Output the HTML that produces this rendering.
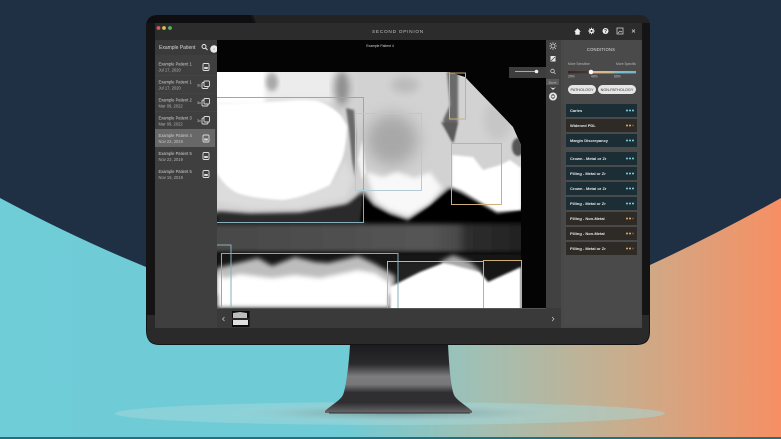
<!DOCTYPE html>
<html><head><meta charset="utf-8">
<style>
html,body{margin:0;padding:0;background:#1f3044;overflow:hidden}
svg{display:block;position:absolute;left:0;top:0;filter:blur(.35px)}
text{font-family:"Liberation Sans",sans-serif}
</style></head>
<body>
<svg width="781" height="439" viewBox="0 0 781 439" xmlns="http://www.w3.org/2000/svg">
<defs>
<linearGradient id="bg" x1="0" x2="1" y1="0" y2="0">
<stop offset="0" stop-color="#6fcdd8"/><stop offset=".44" stop-color="#6fcbd5"/><stop offset=".62" stop-color="#a3bfb2"/><stop offset=".8" stop-color="#c9ad8c"/><stop offset="1" stop-color="#f78f63"/>
</linearGradient>
<linearGradient id="neck" x1="0" x2="0" y1="0" y2="1">
<stop offset="0" stop-color="#1c1c1e"/><stop offset=".28" stop-color="#2a2a2c"/><stop offset=".46" stop-color="#7c7c7e"/><stop offset=".58" stop-color="#77777a"/><stop offset=".7" stop-color="#2f2f31"/><stop offset=".85" stop-color="#2f2f31"/><stop offset="1" stop-color="#6a6a6e"/>
</linearGradient>
<linearGradient id="sl" x1="0" x2="1" y1="0" y2="0">
<stop offset="0" stop-color="#3a2622"/><stop offset=".3" stop-color="#4a3530"/><stop offset=".34" stop-color="#e2b98a"/><stop offset=".6" stop-color="#d8b78e"/><stop offset=".72" stop-color="#7fc0cc"/><stop offset="1" stop-color="#6fb9c8"/>
</linearGradient>
<linearGradient id="band" gradientUnits="userSpaceOnUse" x1="217" x2="521" y1="0" y2="0">
<stop offset="0" stop-color="#484848"/><stop offset=".7" stop-color="#555"/><stop offset=".79" stop-color="#4a4a4a"/><stop offset=".82" stop-color="#2e2e2e"/><stop offset="1" stop-color="#222"/>
</linearGradient>
<radialGradient id="shad"><stop offset="0" stop-color="#6a8a8c" stop-opacity=".75"/><stop offset=".55" stop-color="#90b0b0" stop-opacity=".35"/><stop offset="1" stop-color="#b8dcdc" stop-opacity="0"/></radialGradient>
<filter id="b1" x="-20%" y="-20%" width="140%" height="140%"><feGaussianBlur stdDeviation="1"/></filter>
<filter id="b2" x="-20%" y="-20%" width="140%" height="140%"><feGaussianBlur stdDeviation="2.5"/></filter>
<filter id="b4" x="-30%" y="-30%" width="160%" height="160%"><feGaussianBlur stdDeviation="4"/></filter>
<filter id="b8" x="-40%" y="-40%" width="180%" height="180%"><feGaussianBlur stdDeviation="8"/></filter>
<clipPath id="xr"><path d="M217 72H449L465 77L513 127L521 145V308H217Z"/></clipPath>
<g id="ic1"><rect x="-3" y="-3.500" width="6" height="7" rx="1" fill="none" stroke="#dcdcdc" stroke-width=".9"/><rect x="-1.800" y="0" width="3.600" height="2" fill="#dcdcdc"/></g>
<g id="ic2"><rect x="-3" y="-2.500" width="6" height="6" rx="1" fill="#3d3d3d" stroke="#dcdcdc" stroke-width=".9"/><rect x="-1" y="-4" width="5.500" height="5.500" rx="1" fill="#3d3d3d" stroke="#dcdcdc" stroke-width=".9"/></g>
</defs>

<rect width="781" height="439" fill="#1f3044"/>
<path d="M0 198Q75 238 146 267L650 265Q715 235 781 198V439H0Z" fill="url(#bg)"/>
<rect x="0" y="437" width="781" height="2" fill="#23707f"/>

<ellipse cx="390" cy="413.500" rx="275" ry="11.500" fill="#a5d7da" opacity=".5"/>
<ellipse cx="398" cy="413" rx="180" ry="10" fill="url(#shad)"/>

<!-- stand -->
<path d="M350 345H448C449 362 450 380 453 392C455 400 462 402 472 411V413H325V411C335 402 342 400 344 392C347 380 349 362 350 345Z" fill="url(#neck)"/>
<rect x="329" y="412.500" width="141" height="1" fill="#2e2e30"/>

<!-- monitor -->
<path d="M146 330V27Q146 15 158 15H638Q650 15 650 27V332Q650 345 637 345H159Q146 345 146 330Z" fill="#141414"/>
<path d="M146 27Q146 15 158 15H250L254 23H146Z" fill="#0e0e10"/>
<path d="M253 15H638Q650 15 650 27V23H256Z" fill="#232324"/>
<path d="M147 315H155V328H642V315H649V332Q649 344 637 344H159Q147 344 147 332Z" fill="#2a2a2b"/>

<!-- title bar -->
<rect x="155" y="23" width="487" height="17" fill="#2c2c2d"/>
<circle cx="158.500" cy="28" r="1.900" fill="#d95b62"/>
<circle cx="164" cy="28" r="1.900" fill="#d8c04a"/>
<circle cx="170" cy="28" r="1.900" fill="#58b45a"/>
<text x="398" y="33" font-size="4.800" fill="#bdbdbd" text-anchor="middle" letter-spacing=".7">SECOND OPINION</text>
<path d="M577.500 28.500L574.500 31.500H575.500V34.500H579.500V31.500H580.500Z" fill="#eee" stroke="#eee" stroke-width=".4"/>
<circle cx="591.500" cy="31" r="2.300" fill="#eee"/>
<path d="M591.500 27.700V34.300M588.200 31H594.800M589.200 28.700L593.800 33.300M593.800 28.700L589.200 33.300" stroke="#eee" stroke-width=".9"/>
<circle cx="591.500" cy="31" r="1" fill="#2c2c2d"/>
<circle cx="605.500" cy="31" r="3" fill="#eee"/><text x="605.500" y="33" font-size="5" font-weight="bold" fill="#2c2c2d" text-anchor="middle">?</text>
<rect x="617" y="28" width="6" height="6" fill="none" stroke="#ccc" stroke-width=".8"/><path d="M618 33L620 31L622 32" stroke="#ccc" stroke-width=".7" fill="none"/>
<path d="M632 29.500L635 32.500M635 29.500L632 32.500" stroke="#ccc" stroke-width=".8"/>

<!-- sidebar -->
<rect x="155" y="40" width="62" height="288" fill="#3f3f40"/>
<rect x="155" y="40" width="62" height="15" fill="#3a3a3b"/>
<text x="159" y="49" font-size="5" fill="#d6d6d6">Example Patient</text>
<circle cx="204" cy="46.500" r="2" fill="none" stroke="#eee" stroke-width=".9"/><path d="M205.500 48L207.500 50" stroke="#eee" stroke-width="1"/>
<circle cx="214" cy="49" r="3.800" fill="#e8e8e8"/><text x="214" y="50.500" font-size="4" fill="#444" text-anchor="middle">‹</text>

<g fill="#cfcfcf" font-size="4.100">
<rect x="155" y="129" width="60" height="18" fill="#686868"/>
<text x="158.500" y="65.500">Example Patient 1</text><text x="158.500" y="71.500" fill="#b0b0b0">Jul 17, 2020</text>
<text x="158.500" y="83.500">Example Patient 1</text><text x="158.500" y="89.500" fill="#b0b0b0">Jul 17, 2020</text>
<text x="158.500" y="101.500">Example Patient 2</text><text x="158.500" y="107.500" fill="#b0b0b0">Mar 09, 2022</text>
<text x="158.500" y="119.500">Example Patient 3</text><text x="158.500" y="125.500" fill="#b0b0b0">Mar 09, 2022</text>
<text x="158.500" y="137">Example Patient 4</text><text x="158.500" y="143" fill="#c5c5c5">Nov 22, 2019</text>
<text x="158.500" y="155">Example Patient 5</text><text x="158.500" y="161" fill="#b0b0b0">Nov 22, 2019</text>
<text x="158.500" y="173">Example Patient 5</text><text x="158.500" y="179" fill="#b0b0b0">Nov 15, 2019</text>
</g>
<g stroke="#4a4a4a" stroke-width=".5"><path d="M155 75.500H217M155 93.500H217M155 111.500H217"/></g>
<use href="#ic1" x="206" y="67"/>
<use href="#ic2" x="205" y="85"/><use href="#ic2" x="205" y="102.500"/><use href="#ic2" x="205" y="120.500"/>
<use href="#ic1" x="206" y="138.500"/><use href="#ic1" x="206" y="156"/><use href="#ic1" x="206" y="174"/>
<g font-size="3.600" fill="#cfcfcf"><text x="197" y="86.500">3x</text><text x="197" y="104">3x</text><text x="197" y="122">3x</text></g>

<!-- viewer -->
<rect x="217" y="40" width="329" height="268" fill="#040405"/>
<text x="380" y="47" font-size="3.400" fill="#d5d5d5" text-anchor="middle">Example Patient 4</text>

<g clip-path="url(#xr)">
<rect x="217" y="72" width="305" height="236" fill="#070707"/>
<!-- upper mass -->
<path d="M205 60H530V208L497 213L478 202L460 192L450 188L430 205L408 220L390 214L373 205L363 192L350 205L300 215L250 216L205 212Z" fill="#d2d2d2" filter="url(#b2)"/>
<rect x="205" y="60" width="145" height="42" fill="#ececec" filter="url(#b4)"/>
<rect x="205" y="60" width="60" height="45" fill="#ffffff" filter="url(#b2)"/>
<ellipse cx="272" cy="82" rx="6" ry="9" fill="#a8a8a8" filter="url(#b2)"/>
<ellipse cx="342" cy="88" rx="8" ry="18" fill="#8e8e8e" filter="url(#b4)"/>
<ellipse cx="405" cy="85" rx="14" ry="8" fill="#bbb" filter="url(#b4)"/>
<ellipse cx="498" cy="120" rx="14" ry="20" fill="#c6c6c6" filter="url(#b4)"/>
<ellipse cx="392" cy="140" rx="26" ry="26" fill="#a8a8a8" filter="url(#b8)"/>
<!-- gap 1-2 -->
<path d="M346 108L354 110L356 135L355 178L352 160L349 130Z" fill="#6a6a6a" filter="url(#b1)"/>
<!-- halo beneath filling -->
<path d="M217 170L237 190L284 198L330 184L345 160L353 178L346 198L300 208L250 208L217 202Z" fill="#dcdcdc" filter="url(#b2)"/>
<path d="M217 212L250 214L300 213L345 206L363 194L366 224H217Z" fill="#2c2c2c" filter="url(#b2)"/>
<!-- big filling -->
<path d="M217 104Q250 103 285 101Q305 99 318 101Q334 107 342 117L347 126Q346 150 341 162L330 185Q305 197 284 200Q255 199 237 193Q224 186 217 173Z" fill="#fff" filter="url(#b1)"/>
<!-- tooth 2 crown -->
<path d="M366 172L383 177L397 172L415 178L430 172L442 188L430 203L408 216L388 209L375 200Z" fill="#f8f8f8" filter="url(#b2)"/>
<path d="M362 140L366 172L362 180L358 160Z" fill="#f2f2f2" filter="url(#b1)"/>
<!-- gap 2-3 -->
<path d="M447 72H458L458 120L453 143L443 120L450 105Z" fill="#6a6a6a" filter="url(#b1)"/>
<path d="M441 122L458 122L453 143Z" fill="#5a5a5a" filter="url(#b1)"/>
<!-- right filling -->
<path d="M452 155L473 157L483 170L500 165L510 160L521 168V210L497 211L480 201L462 190L452 186Z" fill="#fff" filter="url(#b1)"/>
<ellipse cx="518" cy="147" rx="6" ry="9" fill="#555" filter="url(#b1)"/>
<!-- black gap above band -->
<path d="M363 196L373 207L390 216L408 222L430 207L450 190L460 194L478 204L497 215L525 211V222H360Z" fill="#060606" filter="url(#b1)"/>
<!-- band -->
<rect x="210" y="224" width="320" height="28" fill="url(#band)" filter="url(#b2)"/>
<!-- lower jaw -->
<rect x="217" y="254" width="305" height="54" fill="#141414" filter="url(#b1)"/>
<path d="M217 268L238 263L258 258L272 266L295 257L315 262L328 263L358 256L375 264L395 276L395 295H217Z" fill="#bdbdbd" filter="url(#b2)"/>
<path d="M440 262L453 255L470 262L482 272L470 278H440Z" fill="#a8a8a8" filter="url(#b2)"/>
<rect x="398" y="262" width="44" height="20" fill="#222" filter="url(#b1)"/>
<path d="M217 268L221 277L226 278L240 274L272 278L295 275L320 278L358 270L375 273L390 283L390 308H217Z" fill="#fff" filter="url(#b2)"/>
<path d="M390 287L398 283L420 272L443 263L453 265L480 272L488 282L521 267V312H390Z" fill="#fff" filter="url(#b1)"/>
</g>

<!-- annotation boxes -->
<g fill="none" stroke-width="1">
<g stroke="#86afbb">
<path d="M217 97.500H363.500V222.500H217"/>
<path d="M217 245H231V308"/>
<path d="M221.500 308V253.500H398V308"/>
<path d="M387.500 308V261.500H483" stroke="#9fc3cc"/>
</g>
<rect x="355.500" y="113.500" width="66" height="77" stroke="#b0cdd6"/>
<g stroke="#cfae78"><rect x="449.500" y="73" width="16" height="46"/><rect x="451.500" y="143.500" width="50" height="61"/><path d="M483.500 308V260.500H521.500V308"/></g>
</g>

<!-- zoom popup -->
<rect x="509" y="67" width="37" height="11" fill="#3d3d3e"/>
<path d="M515 71.500H537" stroke="#cfcfcf" stroke-width=".8"/><circle cx="536.500" cy="71.500" r="1.800" fill="#eee"/>

<!-- toolbar -->
<rect x="546" y="40" width="15" height="288" fill="#414142"/>
<circle cx="553" cy="46" r="2" fill="none" stroke="#ddd" stroke-width=".8"/>
<path d="M553 42V43M553 49V50M549 46H550M556 46H557M550 43L551 44M555 48L556 49M556 43L555 44M551 48L550 49" stroke="#ddd" stroke-width=".6"/>
<rect x="550.500" y="56" width="5" height="5.500" fill="#e8e8e8"/><path d="M551 61L555 57" stroke="#414142" stroke-width=".8"/>
<circle cx="552.500" cy="71" r="1.800" fill="none" stroke="#ccc" stroke-width=".8"/><path d="M554 72.500L555.500 74" stroke="#ccc" stroke-width=".8"/>
<rect x="546" y="79" width="13" height="6" fill="#5a5a5a"/><text x="552.500" y="83.500" font-size="3" fill="#ddd" text-anchor="middle">Zoom</text>
<path d="M550 87Q553 89 556 87L553 90Z" fill="#ddd"/>
<circle cx="553" cy="96.500" r="4" fill="#e8e8e8"/><circle cx="553" cy="96.500" r="2.200" fill="#414142"/><rect x="551.500" y="95.500" width="3" height="2" fill="#e8e8e8"/>

<!-- right panel -->
<rect x="561" y="40" width="81" height="288" fill="#484849"/>
<rect x="564" y="40" width="76" height="285" fill="#4a4a4b"/>
<text x="601" y="51" font-size="4.200" fill="#dedede" text-anchor="middle" letter-spacing=".2">CONDITIONS</text>
<text x="568" y="65" font-size="3.300" fill="#b8b8b8">More Sensitive</text>
<text x="636" y="65" font-size="3.300" fill="#b8b8b8" text-anchor="end">More Specific</text>
<rect x="568" y="71" width="68" height="2.400" fill="url(#sl)"/>
<circle cx="591" cy="72" r="2.300" fill="#fafafa"/>
<g font-size="3.300" fill="#c8c8c8"><text x="568" y="77.500">20%</text><text x="591" y="77.500">40%</text><text x="614" y="77.500">60%</text></g>
<rect x="568" y="85" width="28" height="9" rx="4.500" fill="#e6e6e6"/>
<rect x="598" y="85" width="38" height="9" rx="4.500" fill="#e6e6e6"/>
<text x="582" y="91" font-size="3.800" fill="#333" text-anchor="middle">PATHOLOGY</text>
<text x="617" y="91" font-size="3.800" fill="#333" text-anchor="middle">NON-PATHOLOGY</text>

<!-- condition rows -->
<g>
<rect x="566" y="104" width="71" height="13" fill="#1c2e35"/>
<rect x="566" y="119" width="71" height="13" fill="#2e2a25"/>
<rect x="566" y="134" width="71" height="13" fill="#1c2e35"/>
<rect x="566" y="152" width="71" height="13" fill="#1c2e35"/>
<rect x="566" y="167" width="71" height="13" fill="#1c2e35"/>
<rect x="566" y="182" width="71" height="13" fill="#1c2e35"/>
<rect x="566" y="197" width="71" height="13" fill="#1c2e35"/>
<rect x="566" y="212" width="71" height="13" fill="#2e2a25"/>
<rect x="566" y="227" width="71" height="13" fill="#2e2a25"/>
<rect x="566" y="242" width="71" height="13" fill="#2e2a25"/>
</g>
<g font-size="4" fill="#e8e8e8" font-weight="bold">
<text x="570" y="112">Caries</text>
<text x="570" y="127">Widened PDL</text>
<text x="570" y="142">Margin Discrepancy</text>
<text x="570" y="160">Crown - Metal or Zr</text>
<text x="570" y="175">Filling - Metal or Zr</text>
<text x="570" y="190">Crown - Metal or Zr</text>
<text x="570" y="205">Filling - Metal or Zr</text>
<text x="570" y="220">Filling - Non-Metal</text>
<text x="570" y="235">Filling - Non-Metal</text>
<text x="570" y="250">Filling - Metal or Zr</text>
</g>
<g fill="#7fd0dc">
<circle cx="627" cy="110.500" r="1"/><circle cx="630" cy="110.500" r="1"/><circle cx="633" cy="110.500" r="1"/>
<circle cx="627" cy="140.500" r="1"/><circle cx="630" cy="140.500" r="1"/><circle cx="633" cy="140.500" r="1"/>
<circle cx="627" cy="158.500" r="1"/><circle cx="630" cy="158.500" r="1"/><circle cx="633" cy="158.500" r="1"/>
<circle cx="627" cy="173.500" r="1"/><circle cx="630" cy="173.500" r="1"/><circle cx="633" cy="173.500" r="1"/>
<circle cx="627" cy="188.500" r="1"/><circle cx="630" cy="188.500" r="1"/><circle cx="633" cy="188.500" r="1"/>
<circle cx="627" cy="203.500" r="1"/><circle cx="630" cy="203.500" r="1"/><circle cx="633" cy="203.500" r="1"/>
</g>
<g fill="#e3ae62">
<circle cx="627" cy="125.500" r="1"/><circle cx="630" cy="125.500" r="1"/>
<circle cx="627" cy="218.500" r="1"/><circle cx="630" cy="218.500" r="1"/>
<circle cx="627" cy="233.500" r="1"/><circle cx="630" cy="233.500" r="1"/>
<circle cx="627" cy="248.500" r="1"/><circle cx="630" cy="248.500" r="1"/>
</g>
<g fill="#6b5a42">
<circle cx="633" cy="125.500" r="1"/><circle cx="633" cy="218.500" r="1"/><circle cx="633" cy="233.500" r="1"/><circle cx="633" cy="248.500" r="1"/>
</g>

<!-- bottom strip -->
<rect x="217" y="308" width="344" height="20" fill="#3a3a3b"/>
<rect x="217" y="308" width="329" height="1" fill="#555"/>
<path d="M224.500 317L222.500 319L224.500 321" fill="none" stroke="#ccc" stroke-width=".7"/>
<path d="M552 317L554 319L552 321" fill="none" stroke="#ccc" stroke-width=".7"/>
<rect x="232" y="311" width="17.500" height="16" fill="#0c0c0c"/>
<path d="M233 313L240 312L247 313V318H233Z" fill="#bdbdbd"/>
<path d="M233 320H248V325H233Z" fill="#e0e0e0"/>
<rect x="232" y="318.500" width="17" height="1" fill="#444"/>
</svg>
</body></html>
